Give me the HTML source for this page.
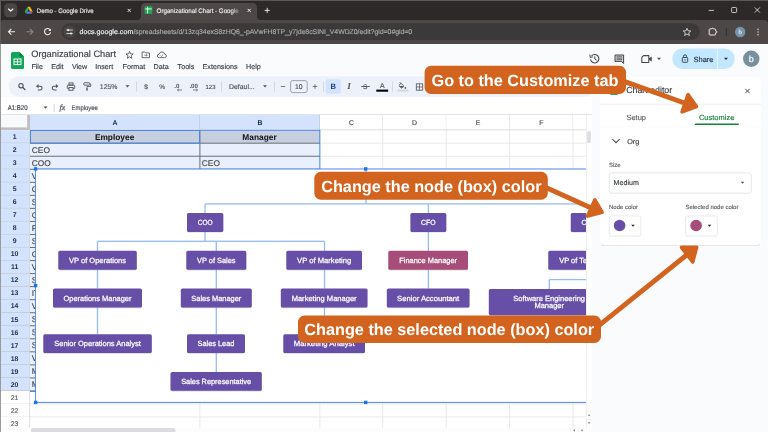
<!DOCTYPE html>
<html lang="en"><head><meta charset="utf-8"><title>Organizational Chart - Google Sheets</title>
<style>
html,body{margin:0;padding:0;}
body{width:768px;height:432px;overflow:hidden;position:relative;background:#fff;font-family:"Liberation Sans", sans-serif;text-rendering:geometricPrecision;}
.sec{position:absolute;left:0;top:0;width:768px;height:432px;will-change:transform;}
svg{display:block;}
text{font-family:"Liberation Sans", sans-serif;white-space:pre;}
</style></head><body>
<div class="sec" id="browser-chrome"><svg width="768" height="432" viewBox="0 0 768 432"><rect x="0" y="0" width="768" height="44" fill="#2d2929"/><path d="M0 44 L0 24 Q0 20 4 20 L764 20 Q768 20 768 24 L768 44 Z" fill="#4d4847"/><rect x="0" y="0" width="768" height="1" fill="#5a5756"/><rect x="4.2" y="3.2" width="13" height="14" fill="#4a4645" rx="4"/><g transform="translate(7.2 7.2)"><path d="M1.3 1.8 L3.5 4 L5.7 1.8" fill="none" stroke="#fff" stroke-width="1.1" stroke-linecap="round" stroke-linejoin="round"/></g><g transform="translate(24.7 6.2)"><path d="M2.75 0.6 L5.25 0.6 L8 5.4 L5.5 5.4 Z" fill="#fbbc04"/>
<path d="M2.75 0.6 L0 5.4 L1.3 7.6 L4 2.9 Z" fill="#34a853"/>
<path d="M1.3 7.6 L6.7 7.6 L8 5.4 L2.6 5.4 Z" fill="#4285f4"/>
<path d="M5.5 5.4 L8 5.4 L6.7 7.6 Z" fill="#ea4335"/></g><g transform="translate(126.2 7.4)"><path d="M1.5 1.5 L4.5 4.5 M4.5 1.5 L1.5 4.5" stroke="#eeeceb" stroke-width="0.95" fill="none"/></g><g transform="translate(137 3)"><path d="M0 17 Q4 17 4 13 L4 4.5 Q4 0 8.5 0 L115.5 0 Q120 0 120 4.5 L120 13 Q120 17 124 17 Z" fill="#4d4847"/></g><rect x="144.6" y="6.2" width="7.8" height="7.8" fill="#23a455" rx="0.8"/><rect x="147.2" y="6.8" width="0.9" height="6.6" fill="#fff"/><rect x="145.2" y="8.5" width="6.6" height="0.9" fill="#fff"/><g transform="translate(246.2 7.4)"><path d="M1.5 1.5 L4.5 4.5 M4.5 1.5 L1.5 4.5" stroke="#f6f4f3" stroke-width="1" fill="none"/></g><g transform="translate(263.2 6.4)"><path d="M4 1.4 L4 6.6 M1.4 4 L6.6 4" stroke="#f0eeed" stroke-width="0.9" fill="none"/></g><g transform="translate(707.5 6)"><path d="M1.2 4.4 L6.4 4.4" stroke="#eee" stroke-width="0.8" fill="none"/></g><g transform="translate(730 6)"><rect x="1.6" y="1.5" width="5" height="5" rx="1" stroke="#eee" stroke-width="0.8" fill="none"/></g><g transform="translate(753.3 6)"><path d="M1.4 1.4 L6.6 6.6 M6.6 1.4 L1.4 6.6" stroke="#eee" stroke-width="0.8" fill="none"/></g><g transform="translate(6.7 26.8)"><path d="M8.3 5 L2 5 M4.6 2.2 L1.8 5 L4.6 7.8" stroke="#eceae9" stroke-width="1.1" fill="none"/></g><g transform="translate(24.7 26.8)"><path d="M1.7 5 L8 5 M5.4 2.2 L8.2 5 L5.4 7.8" stroke="#8a8685" stroke-width="1.1" fill="none"/></g><g transform="translate(42.5 26.8)"><path d="M7.9 3.4 A3.1 3.1 0 1 0 8.1 5.6" stroke="#eceae9" stroke-width="1.1" fill="none"/><path d="M8.4 1.6 L8.4 4.1 L5.9 4.1 Z" fill="#eceae9"/></g><rect x="61.5" y="23.3" width="638.3" height="16.6" fill="#3c393a" rx="8.3"/><rect x="63.4" y="25.6" width="12.4" height="12.4" fill="#4a4645" rx="6.2"/><g transform="translate(65.6 27.8)"><path d="M0.8 2.3 L7.2 2.3 M0.8 5.7 L7.2 5.7" stroke="#eceae9" stroke-width="0.8" fill="none"/><circle cx="2.6" cy="2.3" r="1.1" fill="#eceae9"/><circle cx="5.4" cy="5.7" r="1.1" fill="#eceae9"/></g><g transform="translate(682 27)"><path d="M5 1.3 L6.1 3.8 L8.8 4 L6.7 5.8 L7.4 8.5 L5 7 L2.6 8.5 L3.3 5.8 L1.2 4 L3.9 3.8 Z" stroke="#eceae9" stroke-width="0.8" fill="none" stroke-linejoin="round"/></g><g transform="translate(707 27)"><path d="M3 1.9 L4.7 1.9 Q4.7 1.2 5.4 1.2 Q6.1 1.2 6.1 1.9 L7.8 1.9 Q8.6 1.9 8.6 2.7 L8.6 3.9 Q9.9 3.9 9.9 4.9 Q9.9 5.9 8.6 5.9 L8.6 7.2 Q8.6 8 7.8 8 L3 8 Q2.2 8 2.2 7.2 L2.2 2.7 Q2.2 1.9 3 1.9 Z" stroke="#eceae9" stroke-width="1" fill="none" stroke-linejoin="round"/></g><rect x="725.8" y="28.2" width="0.9" height="7.4" fill="#2e2a2a"/><rect x="735" y="26.8" width="10.4" height="10.4" fill="#7595ab" rx="5.2"/><g transform="translate(755.5 27)"><circle cx="2.5" cy="2.2" r="0.7" fill="#eceae9"/><circle cx="2.5" cy="5" r="0.7" fill="#eceae9"/><circle cx="2.5" cy="7.8" r="0.7" fill="#eceae9"/></g><text x="36.8" y="13" font-size="6.6" fill="#ebe9e8" textLength="56.8" lengthAdjust="spacingAndGlyphs" stroke="#ebe9e8" stroke-width="0.15">Demo - Google Drive</text><text x="156.6" y="13" font-size="6.6" fill="#f1efee" textLength="88.07" lengthAdjust="spacingAndGlyphs" stroke="#f1efee" stroke-width="0.15">Organizational Chart - Google S</text><defs><linearGradient id="fade" x1="0" x2="1" y1="0" y2="0"><stop offset="0" stop-color="#4d4847" stop-opacity="0"/><stop offset="0.75" stop-color="#4d4847"/></linearGradient></defs><rect x="231" y="5" width="14" height="12" fill="url(#fade)"/><text x="79.6" y="34" font-size="7" fill="#f6f4f3" textLength="53.7" lengthAdjust="spacingAndGlyphs" stroke="#f6f4f3" stroke-width="0.15">docs.google.com</text><text x="133.4" y="34" font-size="6.9" fill="#aeaaa9" textLength="278.8" lengthAdjust="spacingAndGlyphs" stroke="#aeaaa9" stroke-width="0.15">/spreadsheets/d/13zq34exS8zHQ6_-pAVwFH8TP_y7jde8cSINI_V4WDZ0/edit?gid=0#gid=0</text><text x="740.2" y="34" font-size="6" fill="#dfe8ee" text-anchor="middle" stroke="#dfe8ee" stroke-width="0.15">b</text></svg></div>
<div class="sec" id="sheets-header"><svg width="768" height="432" viewBox="0 0 768 432"><rect x="0" y="44" width="768" height="388" fill="#f9fbfd"/><g transform="translate(11 52)"><path d="M1.6 0 L8.4 0 L13 4.6 L13 15.4 Q13 17 11.4 17 L1.6 17 Q0 17 0 15.4 L0 1.6 Q0 0 1.6 0 Z" fill="#10a558"/>
<path d="M8.4 0 L13 4.6 L9.8 4.6 Q8.4 4.6 8.4 3.2 Z" fill="#0c8043"/>
<rect x="3" y="7" width="7" height="5.6" fill="none" stroke="#fff" stroke-width="1"/>
<path d="M3 9.8 L10 9.8 M6.5 7 L6.5 12.6" stroke="#fff" stroke-width="0.9"/></g><g transform="translate(124.6 49.8)"><path d="M5 1.5 L6 4 L8.6 4.2 L6.6 5.9 L7.2 8.5 L5 7.1 L2.8 8.5 L3.4 5.9 L1.4 4.2 L4 4 Z" stroke="#444746" stroke-width="0.8" fill="none" stroke-linejoin="round"/></g><g transform="translate(140.8 49.5)"><path d="M1.3 2.5 L4 2.5 L4.9 3.4 L8.7 3.4 L8.7 8.2 L1.3 8.2 Z" stroke="#444746" stroke-width="0.8" fill="none" stroke-linejoin="round"/><path d="M3.6 5.8 L6.4 5.8 M5.4 4.8 L6.5 5.8 L5.4 6.8" stroke="#444746" stroke-width="0.6" fill="none"/></g><g transform="translate(156.4 49.7)"><path d="M3 8 Q1 8 1 6.2 Q1 4.6 2.7 4.4 Q3.2 2.2 5.5 2.2 Q7.8 2.2 8.2 4.4 Q10 4.6 10 6.2 Q10 8 8 8 Z" stroke="#444746" stroke-width="0.8" fill="none"/><path d="M4.2 5.6 L5.2 6.5 L6.9 4.8" stroke="#444746" stroke-width="0.6" fill="none"/></g><g transform="translate(589.3 53.4)"><path d="M2.2 2.6 A4.2 4.2 0 1 1 1.3 6.3" stroke="#444746" stroke-width="1.1" fill="none"/><path d="M0.6 1.2 L0.9 3.9 L3.6 3.5" stroke="#444746" stroke-width="1" fill="none"/><path d="M5.5 2.9 L5.5 5.6 L7.4 6.9" stroke="#444746" stroke-width="1" fill="none"/></g><g transform="translate(613.7 53.7)"><path d="M1.3 1.3 L9.9 1.3 L9.9 9.8 L7.8 7.7 L1.3 7.7 Z" stroke="#444746" stroke-width="1" fill="#c9cbcd" stroke-linejoin="round"/><path d="M2.9 3.1 L8.3 3.1 M2.9 4.5 L8.3 4.5 M2.9 5.9 L8.3 5.9" stroke="#444746" stroke-width="0.7"/></g><g transform="translate(640.5 54)"><path d="M3 1.6 L8.3 1.6 L8.3 8.4 L1.3 8.4 L1.3 3.3 Z" stroke="#444746" stroke-width="1.05" fill="none" stroke-linejoin="round"/><path d="M8.5 4.2 L11.2 2.4 L11.2 7.6 L8.5 5.8 Z" fill="#444746"/></g><g transform="translate(656 57)"><path d="M1 0.8 L5 0.8 L3 3 Z" fill="#444746"/></g><rect x="672.3" y="48.6" width="62.5" height="20.5" fill="#c2e7ff" rx="10.25"/><rect x="717" y="48.6" width="0.7" height="20.5" fill="#f9fbfd"/><g transform="translate(681 53.5)"><rect x="1.3" y="4" width="5.4" height="4.8" rx="0.8" stroke="#1f2f3f" stroke-width="0.85" fill="none"/><path d="M2.5 4 L2.5 2.9 Q2.5 1.3 4 1.3 Q5.5 1.3 5.5 2.9 L5.5 4" stroke="#1f2f3f" stroke-width="0.85" fill="none"/><circle cx="4" cy="6.4" r="0.7" fill="#1f2f3f"/></g><g transform="translate(723 57)"><path d="M1 0.8 L5 0.8 L3 3 Z" fill="#1f2f3f"/></g><rect x="743" y="50.5" width="16.5" height="16.5" fill="#78909c" rx="8.25"/></svg></div>
<div class="sec" id="toolbar"><svg width="768" height="432" viewBox="0 0 768 432"><rect x="8.7" y="76.3" width="585" height="20.6" fill="#edf2fa" rx="10.3"/><g transform="translate(17 81.7)"><circle cx="4" cy="4" r="2.15" stroke="#505355" stroke-width="1.1" fill="none"/><path d="M5.6 5.6 L8.3 8.3" stroke="#505355" stroke-width="1.25"/></g><g transform="translate(34.2 82.2)"><path d="M3.5 4 L6.2 4 Q7.9 4 7.9 5.9 Q7.9 7.8 6.2 7.8 L3.6 7.8" stroke="#505355" stroke-width="1.05" fill="none"/><path d="M4.3 1.9 L1.8 4 L4.3 6.1 Z" fill="#505355"/></g><g transform="translate(50.2 82.2)"><path d="M6.5 4 L3.8 4 Q2.1 4 2.1 5.9 Q2.1 7.8 3.8 7.8 L6.4 7.8" stroke="#505355" stroke-width="1.05" fill="none"/><path d="M5.7 1.9 L8.2 4 L5.7 6.1 Z" fill="#505355"/></g><g transform="translate(66 81.5)"><rect x="1.3" y="3.6" width="7.4" height="3.6" rx="0.8" stroke="#505355" stroke-width="0.9" fill="none"/><rect x="3" y="1.4" width="4" height="2.2" stroke="#505355" stroke-width="0.9" fill="none"/><rect x="3" y="6" width="4" height="2.8" stroke="#505355" stroke-width="0.9" fill="#edf2fa"/></g><g transform="translate(82 81.5)"><rect x="1.8" y="1.3" width="6" height="2.4" rx="0.6" stroke="#505355" stroke-width="0.9" fill="none"/><path d="M7.8 2.5 L8.8 2.5 L8.8 5 L5 5 L5 6.3" stroke="#505355" stroke-width="0.8" fill="none"/><rect x="4.3" y="6.3" width="1.4" height="2.8" fill="#505355"/></g><g transform="translate(124.5 84.5)"><path d="M1 0.8 L5 0.8 L3 3 Z" fill="#505355"/></g><rect x="136" y="81.5" width="0.6" height="10" fill="#c7c7c7"/><rect x="221.3" y="81.5" width="0.6" height="10" fill="#c7c7c7"/><rect x="274.2" y="81.5" width="0.6" height="10" fill="#c7c7c7"/><rect x="323.3" y="81.5" width="0.6" height="10" fill="#c7c7c7"/><rect x="392.3" y="81.5" width="0.6" height="10" fill="#c7c7c7"/><g transform="translate(176.5 88)"><path d="M5.5 2 L1 2 M2.3 0.8 L1 2 L2.3 3.2" stroke="#505355" stroke-width="0.7" fill="none"/></g><g transform="translate(192.5 88)"><path d="M0.5 2 L5 2 M3.7 0.8 L5 2 L3.7 3.2" stroke="#505355" stroke-width="0.7" fill="none"/></g><g transform="translate(262 84.5)"><path d="M1 0.8 L5 0.8 L3 3 Z" fill="#505355"/></g><g transform="translate(279 82.5)"><path d="M1.8 4 L6.2 4" stroke="#505355" stroke-width="0.75"/></g><rect x="290.6" y="80.6" width="16.6" height="12" fill="none" rx="2.2" stroke="#85888a" stroke-width="0.75"/><g transform="translate(311 82.5)"><path d="M1.7 4 L6.3 4 M4 1.7 L4 6.3" stroke="#505355" stroke-width="0.75"/></g><rect x="325.8" y="79.3" width="15" height="14.5" fill="#d3e3fd" rx="2"/><rect x="376.3" y="89.6" width="11.8" height="2.1" fill="#000"/><g transform="translate(397 81)"><path d="M3.8 2.2 L7 5.2 L4.6 7.3 L2 4.8 Z" stroke="#505355" stroke-width="0.8" fill="none" stroke-linejoin="round"/><path d="M2.4 5 L6.6 5 L4.6 7 Z" fill="#505355"/><path d="M2.8 1.2 L4.4 2.8" stroke="#505355" stroke-width="0.8"/><circle cx="8.4" cy="6.9" r="0.85" fill="#505355"/><rect x="0.3" y="8.6" width="11.2" height="1.9" fill="#d6d6d6"/></g><g transform="translate(415.5 83)"><rect x="0.8" y="0.8" width="6.4" height="6.4" stroke="#505355" stroke-width="0.8" fill="none"/><path d="M4 0.8 L4 7.2 M0.8 4 L7.2 4" stroke="#505355" stroke-width="0.7"/></g><rect x="361" y="86" width="8.8" height="0.85" fill="#505355"/></svg></div>
<div class="sec" id="formula-bar"><svg width="768" height="432" viewBox="0 0 768 432"><rect x="0" y="97" width="592.5" height="17.5" fill="#fff"/><g transform="translate(42.5 105.8)"><path d="M1 0.8 L5 0.8 L3 3 Z" fill="#505355"/></g><rect x="53.8" y="104" width="0.7" height="8" fill="#c7c7c7"/><rect x="0" y="114.2" width="592.5" height="0.8" fill="#dcdcdc"/></svg></div>
<div class="sec" id="grid"><svg width="768" height="432" viewBox="0 0 768 432"><rect x="0" y="115" width="592.5" height="317" fill="#fff"/><rect x="30" y="115" width="170" height="15" fill="#d3e3fd"/><rect x="199.5" y="115" width="0.8" height="15" fill="#b9bdc6"/><rect x="200" y="115" width="120" height="15" fill="#d3e3fd"/><rect x="319.5" y="115" width="0.8" height="15" fill="#b9bdc6"/><rect x="320" y="115" width="62.9" height="15" fill="#fff"/><rect x="382.4" y="115" width="0.8" height="15" fill="#dadada"/><rect x="382.9" y="115" width="63.4" height="15" fill="#fff"/><rect x="445.8" y="115" width="0.8" height="15" fill="#dadada"/><rect x="446.3" y="115" width="63.4" height="15" fill="#fff"/><rect x="509.2" y="115" width="0.8" height="15" fill="#dadada"/><rect x="509.7" y="115" width="63.4" height="15" fill="#fff"/><rect x="572.6" y="115" width="0.8" height="15" fill="#dadada"/><rect x="573.1" y="115" width="18.9" height="15" fill="#fff"/><rect x="591.5" y="115" width="0.8" height="15" fill="#dadada"/><rect x="30" y="129.5" width="562" height="0.8" fill="#d4d4d4"/><rect x="0" y="115" width="30" height="15" fill="#bfbfbf"/><rect x="0" y="115" width="27.2" height="12.4" fill="#f8f9fa"/><rect x="0" y="130.2" width="30" height="13.04" fill="#d3e3fd"/><rect x="0" y="142.74" width="30" height="0.8" fill="#b9bdc6"/><rect x="30" y="142.74" width="562" height="0.8" fill="#e3e3e3"/><rect x="0" y="143.24" width="30" height="13.04" fill="#d3e3fd"/><rect x="0" y="155.78" width="30" height="0.8" fill="#b9bdc6"/><rect x="30" y="155.78" width="562" height="0.8" fill="#e3e3e3"/><rect x="0" y="156.28" width="30" height="13.04" fill="#d3e3fd"/><rect x="0" y="168.82" width="30" height="0.8" fill="#b9bdc6"/><rect x="30" y="168.82" width="562" height="0.8" fill="#e3e3e3"/><rect x="0" y="169.32" width="30" height="13.04" fill="#d3e3fd"/><rect x="0" y="181.86" width="30" height="0.8" fill="#b9bdc6"/><rect x="30" y="181.86" width="562" height="0.8" fill="#e3e3e3"/><rect x="0" y="182.36" width="30" height="13.04" fill="#d3e3fd"/><rect x="0" y="194.9" width="30" height="0.8" fill="#b9bdc6"/><rect x="30" y="194.9" width="562" height="0.8" fill="#e3e3e3"/><rect x="0" y="195.4" width="30" height="13.04" fill="#d3e3fd"/><rect x="0" y="207.94" width="30" height="0.8" fill="#b9bdc6"/><rect x="30" y="207.94" width="562" height="0.8" fill="#e3e3e3"/><rect x="0" y="208.44" width="30" height="13.04" fill="#d3e3fd"/><rect x="0" y="220.98" width="30" height="0.8" fill="#b9bdc6"/><rect x="30" y="220.98" width="562" height="0.8" fill="#e3e3e3"/><rect x="0" y="221.48" width="30" height="13.04" fill="#d3e3fd"/><rect x="0" y="234.02" width="30" height="0.8" fill="#b9bdc6"/><rect x="30" y="234.02" width="562" height="0.8" fill="#e3e3e3"/><rect x="0" y="234.52" width="30" height="13.04" fill="#d3e3fd"/><rect x="0" y="247.06" width="30" height="0.8" fill="#b9bdc6"/><rect x="30" y="247.06" width="562" height="0.8" fill="#e3e3e3"/><rect x="0" y="247.56" width="30" height="13.04" fill="#d3e3fd"/><rect x="0" y="260.1" width="30" height="0.8" fill="#b9bdc6"/><rect x="30" y="260.1" width="562" height="0.8" fill="#e3e3e3"/><rect x="0" y="260.6" width="30" height="13.04" fill="#d3e3fd"/><rect x="0" y="273.14" width="30" height="0.8" fill="#b9bdc6"/><rect x="30" y="273.14" width="562" height="0.8" fill="#e3e3e3"/><rect x="0" y="273.64" width="30" height="13.04" fill="#d3e3fd"/><rect x="0" y="286.18" width="30" height="0.8" fill="#b9bdc6"/><rect x="30" y="286.18" width="562" height="0.8" fill="#e3e3e3"/><rect x="0" y="286.68" width="30" height="13.04" fill="#d3e3fd"/><rect x="0" y="299.22" width="30" height="0.8" fill="#b9bdc6"/><rect x="30" y="299.22" width="562" height="0.8" fill="#e3e3e3"/><rect x="0" y="299.72" width="30" height="13.04" fill="#d3e3fd"/><rect x="0" y="312.26" width="30" height="0.8" fill="#b9bdc6"/><rect x="30" y="312.26" width="562" height="0.8" fill="#e3e3e3"/><rect x="0" y="312.76" width="30" height="13.04" fill="#d3e3fd"/><rect x="0" y="325.3" width="30" height="0.8" fill="#b9bdc6"/><rect x="30" y="325.3" width="562" height="0.8" fill="#e3e3e3"/><rect x="0" y="325.8" width="30" height="13.04" fill="#d3e3fd"/><rect x="0" y="338.34" width="30" height="0.8" fill="#b9bdc6"/><rect x="30" y="338.34" width="562" height="0.8" fill="#e3e3e3"/><rect x="0" y="338.84" width="30" height="13.04" fill="#d3e3fd"/><rect x="0" y="351.38" width="30" height="0.8" fill="#b9bdc6"/><rect x="30" y="351.38" width="562" height="0.8" fill="#e3e3e3"/><rect x="0" y="351.88" width="30" height="13.04" fill="#d3e3fd"/><rect x="0" y="364.42" width="30" height="0.8" fill="#b9bdc6"/><rect x="30" y="364.42" width="562" height="0.8" fill="#e3e3e3"/><rect x="0" y="364.92" width="30" height="13.04" fill="#d3e3fd"/><rect x="0" y="377.46" width="30" height="0.8" fill="#b9bdc6"/><rect x="30" y="377.46" width="562" height="0.8" fill="#e3e3e3"/><rect x="0" y="377.96" width="30" height="13.04" fill="#d3e3fd"/><rect x="0" y="390.5" width="30" height="0.8" fill="#b9bdc6"/><rect x="30" y="390.5" width="562" height="0.8" fill="#e3e3e3"/><rect x="0" y="391" width="30" height="13.04" fill="#fff"/><rect x="0" y="403.54" width="30" height="0.8" fill="#e3e3e3"/><rect x="30" y="403.54" width="562" height="0.8" fill="#e3e3e3"/><rect x="0" y="404.04" width="30" height="13.04" fill="#fff"/><rect x="0" y="416.58" width="30" height="0.8" fill="#e3e3e3"/><rect x="30" y="416.58" width="562" height="0.8" fill="#e3e3e3"/><rect x="0" y="417.08" width="30" height="13.04" fill="#fff"/><rect x="0" y="429.62" width="30" height="0.8" fill="#e3e3e3"/><rect x="30" y="429.62" width="562" height="0.8" fill="#e3e3e3"/><rect x="29.3" y="130" width="0.8" height="302" fill="#d4d4d4"/><rect x="199.5" y="130" width="0.8" height="302" fill="#e3e3e3"/><rect x="319.5" y="130" width="0.8" height="302" fill="#e3e3e3"/><rect x="382.4" y="130" width="0.8" height="302" fill="#e3e3e3"/><rect x="445.8" y="130" width="0.8" height="302" fill="#e3e3e3"/><rect x="509.2" y="130" width="0.8" height="302" fill="#e3e3e3"/><rect x="572.6" y="130" width="0.8" height="302" fill="#e3e3e3"/><rect x="30" y="130.2" width="290" height="13.04" fill="#c5cfdf"/><rect x="30" y="143.24" width="290" height="26.08" fill="#e8f0fe"/><rect x="30" y="169.32" width="7" height="221.68" fill="#e8f0fe"/><rect x="30" y="142.69" width="290" height="1" fill="#6b6f75"/><rect x="30" y="155.73" width="290" height="1" fill="#6b6f75"/><rect x="30" y="168.77" width="290" height="1" fill="#6b6f75"/><rect x="30" y="181.81" width="7" height="1" fill="#6b6f75"/><rect x="30" y="194.85" width="7" height="1" fill="#6b6f75"/><rect x="30" y="207.89" width="7" height="1" fill="#6b6f75"/><rect x="30" y="220.93" width="7" height="1" fill="#6b6f75"/><rect x="30" y="233.97" width="7" height="1" fill="#6b6f75"/><rect x="30" y="247.01" width="7" height="1" fill="#6b6f75"/><rect x="30" y="260.05" width="7" height="1" fill="#6b6f75"/><rect x="30" y="273.09" width="7" height="1" fill="#6b6f75"/><rect x="30" y="286.13" width="7" height="1" fill="#6b6f75"/><rect x="30" y="299.17" width="7" height="1" fill="#6b6f75"/><rect x="30" y="312.21" width="7" height="1" fill="#6b6f75"/><rect x="30" y="325.25" width="7" height="1" fill="#6b6f75"/><rect x="30" y="338.29" width="7" height="1" fill="#6b6f75"/><rect x="30" y="351.33" width="7" height="1" fill="#6b6f75"/><rect x="30" y="364.37" width="7" height="1" fill="#6b6f75"/><rect x="30" y="377.41" width="7" height="1" fill="#6b6f75"/><rect x="30" y="390.45" width="7" height="1" fill="#6b6f75"/><rect x="199.4" y="130.2" width="1" height="39.12" fill="#6b6f75"/><rect x="30" y="390.9" width="7" height="0.9" fill="#3b7ded"/><rect x="319.4" y="129.8" width="0.9" height="39.72" fill="#3b7ded"/><rect x="30.5" y="130.5" width="169" height="12.7" fill="none" stroke="#4a86e8" stroke-width="1"/><rect x="200" y="129.9" width="120" height="0.8" fill="#3b7ded"/><rect x="586" y="115" width="6.5" height="317" fill="#fff"/><rect x="586" y="115" width="0.7" height="317" fill="#e9e9e9"/><rect x="587.2" y="131" width="3.6" height="12.2" fill="#dadce0" rx="1.8"/><rect x="0" y="427.6" width="592.5" height="5" fill="#fcfcfd"/><rect x="570.3" y="427.6" width="0.6" height="5" fill="#e6e6e6"/><rect x="578.3" y="427.6" width="0.6" height="5" fill="#e6e6e6"/><rect x="586" y="411" width="6" height="0.6" fill="#e6e6e6"/><rect x="586" y="419.6" width="6" height="0.6" fill="#e6e6e6"/><rect x="31" y="428" width="144.5" height="5" fill="#dadce0" rx="2.2"/><g transform="translate(570 427.2)"><path d="M5 1.8 L3.2 3.2 L5 4.6 Z M11.5 1.8 L13.3 3.2 L11.5 4.6 Z" fill="#80868b"/></g><g transform="translate(586.1 411.3)"><path d="M1.6 4.5 L3 2.7 L4.4 4.5 Z M1.6 11 L3 12.8 L4.4 11 Z" fill="#80868b"/></g><text x="31.2" y="57" font-size="9.25" fill="#3c4043" stroke="#3c4043" stroke-width="0.15">Organizational Chart</text><text x="31.4" y="69" font-size="7.15" fill="#3c4043" stroke="#3c4043" stroke-width="0.15">File</text><text x="51.3" y="69" font-size="7.15" fill="#3c4043" stroke="#3c4043" stroke-width="0.15">Edit</text><text x="71.9" y="69" font-size="7.15" fill="#3c4043" stroke="#3c4043" stroke-width="0.15">View</text><text x="95.3" y="69" font-size="7.15" fill="#3c4043" stroke="#3c4043" stroke-width="0.15">Insert</text><text x="122.6" y="69" font-size="7.15" fill="#3c4043" stroke="#3c4043" stroke-width="0.15">Format</text><text x="153.6" y="69" font-size="7.15" fill="#3c4043" stroke="#3c4043" stroke-width="0.15">Data</text><text x="177.6" y="69" font-size="7.15" fill="#3c4043" stroke="#3c4043" stroke-width="0.15">Tools</text><text x="202.6" y="69" font-size="7.15" fill="#3c4043" stroke="#3c4043" stroke-width="0.15">Extensions</text><text x="246" y="69" font-size="7.15" fill="#3c4043" stroke="#3c4043" stroke-width="0.15">Help</text><text x="693.6" y="62" font-size="7.4" fill="#1f2f3f" stroke="#1f2f3f" stroke-width="0.15">Share</text><text x="751.3" y="62" font-size="9" fill="#fff" text-anchor="middle" stroke="#fff" stroke-width="0.15">b</text><text x="99.8" y="89" font-size="6.9" fill="#505355" stroke="#505355" stroke-width="0.15">125%</text><text x="146" y="89" font-size="6.6" fill="#505355" text-anchor="middle" stroke="#505355" stroke-width="0.15">$</text><text x="162.2" y="89" font-size="6.6" fill="#505355" text-anchor="middle" stroke="#505355" stroke-width="0.15">%</text><text x="176.8" y="88" font-size="6.2" fill="#505355" font-weight="700" text-anchor="middle">.0</text><text x="193.7" y="88" font-size="6.2" fill="#505355" font-weight="700" text-anchor="middle">.00</text><text x="210.5" y="89" font-size="5.9" fill="#505355" text-anchor="middle" stroke="#505355" stroke-width="0.15">123</text><text x="229" y="89" font-size="6.9" fill="#505355" stroke="#505355" stroke-width="0.15">Defaul...</text><text x="298.8" y="89" font-size="6.9" fill="#505355" text-anchor="middle" stroke="#505355" stroke-width="0.15">10</text><text x="333.3" y="89" font-size="7.6" fill="#1a3a6e" font-weight="700" text-anchor="middle">B</text><text x="349" y="89" font-size="9.2" fill="#505355" font-weight="700" text-anchor="middle" style="font-style:italic;font-family:Liberation Serif,serif">I</text><text x="365.3" y="89" font-size="6.6" fill="#505355" text-anchor="middle" stroke="#505355" stroke-width="0.15">S</text><text x="382.2" y="88" font-size="6.9" fill="#505355" text-anchor="middle" stroke="#505355" stroke-width="0.2">A</text><text x="7.7" y="110" font-size="6.8" fill="#3c4043" textLength="19.9" lengthAdjust="spacingAndGlyphs" stroke="#3c4043" stroke-width="0.15">A1:B20</text><text x="59.6" y="110" font-size="7.8" fill="#5f6368" style="font-style:italic;font-family:Liberation Serif,serif" stroke="#5f6368" stroke-width="0.3">fx</text><text x="71.5" y="110" font-size="6.6" fill="#4a4d50" textLength="26.4" lengthAdjust="spacingAndGlyphs" stroke="#4a4d50" stroke-width="0.15">Employee</text><text x="115" y="125" font-size="6.9" fill="#0c2b57" font-weight="700" text-anchor="middle">A</text><text x="260" y="125" font-size="6.9" fill="#0c2b57" font-weight="700" text-anchor="middle">B</text><text x="351.45" y="125" font-size="6.9" fill="#4a4d50" text-anchor="middle" stroke="#4a4d50" stroke-width="0.15">C</text><text x="414.6" y="125" font-size="6.9" fill="#4a4d50" text-anchor="middle" stroke="#4a4d50" stroke-width="0.15">D</text><text x="478" y="125" font-size="6.9" fill="#4a4d50" text-anchor="middle" stroke="#4a4d50" stroke-width="0.15">E</text><text x="541.4" y="125" font-size="6.9" fill="#4a4d50" text-anchor="middle" stroke="#4a4d50" stroke-width="0.15">F</text><text x="14.6" y="139" font-size="6.9" fill="#1d2d4a" font-weight="700" text-anchor="middle">1</text><text x="14.6" y="152" font-size="6.9" fill="#1d2d4a" font-weight="700" text-anchor="middle">2</text><text x="14.6" y="165" font-size="6.9" fill="#1d2d4a" font-weight="700" text-anchor="middle">3</text><text x="14.6" y="178" font-size="6.9" fill="#1d2d4a" font-weight="700" text-anchor="middle">4</text><text x="14.6" y="191" font-size="6.9" fill="#1d2d4a" font-weight="700" text-anchor="middle">5</text><text x="14.6" y="204" font-size="6.9" fill="#1d2d4a" font-weight="700" text-anchor="middle">6</text><text x="14.6" y="217" font-size="6.9" fill="#1d2d4a" font-weight="700" text-anchor="middle">7</text><text x="14.6" y="230" font-size="6.9" fill="#1d2d4a" font-weight="700" text-anchor="middle">8</text><text x="14.6" y="243" font-size="6.9" fill="#1d2d4a" font-weight="700" text-anchor="middle">9</text><text x="14.6" y="256" font-size="6.9" fill="#1d2d4a" font-weight="700" text-anchor="middle">10</text><text x="14.6" y="269" font-size="6.9" fill="#1d2d4a" font-weight="700" text-anchor="middle">11</text><text x="14.6" y="282" font-size="6.9" fill="#1d2d4a" font-weight="700" text-anchor="middle">12</text><text x="14.6" y="295" font-size="6.9" fill="#1d2d4a" font-weight="700" text-anchor="middle">13</text><text x="14.6" y="308" font-size="6.9" fill="#1d2d4a" font-weight="700" text-anchor="middle">14</text><text x="14.6" y="322" font-size="6.9" fill="#1d2d4a" font-weight="700" text-anchor="middle">15</text><text x="14.6" y="335" font-size="6.9" fill="#1d2d4a" font-weight="700" text-anchor="middle">16</text><text x="14.6" y="348" font-size="6.9" fill="#1d2d4a" font-weight="700" text-anchor="middle">17</text><text x="14.6" y="361" font-size="6.9" fill="#1d2d4a" font-weight="700" text-anchor="middle">18</text><text x="14.6" y="374" font-size="6.9" fill="#1d2d4a" font-weight="700" text-anchor="middle">19</text><text x="14.6" y="387" font-size="6.9" fill="#1d2d4a" font-weight="700" text-anchor="middle">20</text><text x="14.6" y="400" font-size="6.9" fill="#5f6368" text-anchor="middle" stroke="#5f6368" stroke-width="0.15">21</text><text x="14.6" y="413" font-size="6.9" fill="#5f6368" text-anchor="middle" stroke="#5f6368" stroke-width="0.15">22</text><text x="14.6" y="426" font-size="6.9" fill="#5f6368" text-anchor="middle" stroke="#5f6368" stroke-width="0.15">23</text><text x="31.8" y="179" font-size="8.3" fill="#454545" stroke="#454545" stroke-width="0.15">V</text><text x="31.8" y="192" font-size="8.3" fill="#454545" stroke="#454545" stroke-width="0.15">O</text><text x="31.8" y="205" font-size="8.3" fill="#454545" stroke="#454545" stroke-width="0.15">S</text><text x="31.8" y="218" font-size="8.3" fill="#454545" stroke="#454545" stroke-width="0.15">C</text><text x="31.8" y="231" font-size="8.3" fill="#454545" stroke="#454545" stroke-width="0.15">F</text><text x="31.8" y="244" font-size="8.3" fill="#454545" stroke="#454545" stroke-width="0.15">S</text><text x="31.8" y="257" font-size="8.3" fill="#454545" stroke="#454545" stroke-width="0.15">C</text><text x="31.8" y="270" font-size="8.3" fill="#454545" stroke="#454545" stroke-width="0.15">V</text><text x="31.8" y="283" font-size="8.3" fill="#454545" stroke="#454545" stroke-width="0.15">S</text><text x="31.8" y="296" font-size="8.3" fill="#454545" stroke="#454545" stroke-width="0.15">IT</text><text x="31.8" y="309" font-size="8.3" fill="#454545" stroke="#454545" stroke-width="0.15">V</text><text x="31.8" y="322" font-size="8.3" fill="#454545" stroke="#454545" stroke-width="0.15">S</text><text x="31.8" y="335" font-size="8.3" fill="#454545" stroke="#454545" stroke-width="0.15">S</text><text x="31.8" y="348" font-size="8.3" fill="#454545" stroke="#454545" stroke-width="0.15">S</text><text x="31.8" y="361" font-size="8.3" fill="#454545" stroke="#454545" stroke-width="0.15">V</text><text x="31.8" y="374" font-size="8.3" fill="#454545" stroke="#454545" stroke-width="0.15">M</text><text x="31.8" y="387" font-size="8.3" fill="#454545" stroke="#454545" stroke-width="0.15">M</text><text x="114.6" y="140" font-size="8.35" fill="#111" font-weight="700" text-anchor="middle">Employee</text><text x="259.5" y="140" font-size="8.35" fill="#111" font-weight="700" text-anchor="middle">Manager</text><text x="31.8" y="153" font-size="8.35" fill="#454545" stroke="#454545" stroke-width="0.15">CEO</text><text x="31.8" y="166" font-size="8.35" fill="#454545" stroke="#454545" stroke-width="0.15">COO</text><text x="201.8" y="166" font-size="8.35" fill="#454545" stroke="#454545" stroke-width="0.15">CEO</text></svg></div>
<div class="sec" id="org-chart"><svg width="768" height="432" viewBox="0 0 768 432"><rect x="36" y="169" width="550" height="233" fill="#fff"/><rect x="365.35" y="170" width="1.3" height="34" fill="#94bbf7"/><rect x="205" y="203.25" width="381" height="1.3" fill="#94bbf7"/><rect x="204.35" y="204" width="1.3" height="9" fill="#94bbf7"/><rect x="427.75" y="204" width="1.3" height="9" fill="#94bbf7"/><rect x="204.35" y="232" width="1.3" height="9.3" fill="#94bbf7"/><rect x="97.5" y="240.65" width="227" height="1.3" fill="#94bbf7"/><rect x="96.85" y="241.3" width="1.3" height="9.7" fill="#94bbf7"/><rect x="215.65" y="241.3" width="1.3" height="9.7" fill="#94bbf7"/><rect x="323.85" y="241.3" width="1.3" height="9.7" fill="#94bbf7"/><rect x="427.75" y="232" width="1.3" height="19" fill="#94bbf7"/><rect x="96.85" y="270" width="1.3" height="18.5" fill="#94bbf7"/><rect x="215.65" y="270" width="1.3" height="18.5" fill="#94bbf7"/><rect x="323.85" y="270" width="1.3" height="18.5" fill="#94bbf7"/><rect x="427.75" y="270" width="1.3" height="18.5" fill="#94bbf7"/><rect x="96.85" y="307.5" width="1.3" height="26.8" fill="#94bbf7"/><rect x="215.65" y="307.5" width="1.3" height="26.8" fill="#94bbf7"/><rect x="323.85" y="307.5" width="1.3" height="26.8" fill="#94bbf7"/><rect x="215.65" y="353" width="1.3" height="19" fill="#94bbf7"/><rect x="549.3" y="278.95" width="36.7" height="1.3" fill="#94bbf7"/><rect x="548.65" y="279.6" width="1.3" height="9.4" fill="#94bbf7"/><rect x="187.2" y="213.6" width="36.1" height="19" fill="#000" rx="1.6" opacity="0.16"/><rect x="187" y="213" width="36.3" height="19" fill="#674ea7" rx="1.6"/><rect x="410.6" y="213.6" width="35.7" height="19" fill="#000" rx="1.6" opacity="0.16"/><rect x="410.4" y="213" width="35.9" height="19" fill="#674ea7" rx="1.6"/><rect x="570.95" y="213.6" width="15.05" height="19" fill="#000" rx="1.6" opacity="0.16"/><path d="M572.35 213 L586 213 L586 232 L572.35 232 Q570.75 232 570.75 230.4 L570.75 214.6 Q570.75 213 572.35 213 Z" fill="#674ea7"/><rect x="58.5" y="251.4" width="78.3" height="19" fill="#000" rx="1.6" opacity="0.16"/><rect x="58.3" y="250.8" width="78.5" height="19" fill="#674ea7" rx="1.6"/><rect x="186.5" y="251.4" width="59.8" height="19" fill="#000" rx="1.6" opacity="0.16"/><rect x="186.3" y="250.8" width="60" height="19" fill="#674ea7" rx="1.6"/><rect x="286.5" y="251.4" width="75.5" height="19" fill="#000" rx="1.6" opacity="0.16"/><rect x="286.3" y="250.8" width="75.7" height="19" fill="#674ea7" rx="1.6"/><rect x="388.5" y="251.4" width="79.5" height="19" fill="#000" rx="1.6" opacity="0.16"/><rect x="388.3" y="250.8" width="79.7" height="19" fill="#a64d79" rx="1.6"/><rect x="548.45" y="251.4" width="37.55" height="19" fill="#000" rx="1.6" opacity="0.16"/><path d="M549.85 250.8 L586 250.8 L586 269.8 L549.85 269.8 Q548.25 269.8 548.25 268.2 L548.25 252.4 Q548.25 250.8 549.85 250.8 Z" fill="#674ea7"/><rect x="53.2" y="289.2" width="88.8" height="19" fill="#000" rx="1.6" opacity="0.16"/><rect x="53" y="288.6" width="89" height="19" fill="#674ea7" rx="1.6"/><rect x="181" y="289.2" width="70.8" height="19" fill="#000" rx="1.6" opacity="0.16"/><rect x="180.8" y="288.6" width="71" height="19" fill="#674ea7" rx="1.6"/><rect x="281" y="289.2" width="86.5" height="19" fill="#000" rx="1.6" opacity="0.16"/><rect x="280.8" y="288.6" width="86.7" height="19" fill="#674ea7" rx="1.6"/><rect x="387" y="289.2" width="82.5" height="19" fill="#000" rx="1.6" opacity="0.16"/><rect x="386.8" y="288.6" width="82.7" height="19" fill="#674ea7" rx="1.6"/><rect x="489" y="289.5" width="97" height="26.3" fill="#000" rx="1.6" opacity="0.16"/><path d="M490.4 288.9 L586 288.9 L586 315.2 L490.4 315.2 Q488.8 315.2 488.8 313.6 L488.8 290.5 Q488.8 288.9 490.4 288.9 Z" fill="#674ea7"/><rect x="43.5" y="334.9" width="108.3" height="18.8" fill="#000" rx="1.6" opacity="0.16"/><rect x="43.3" y="334.3" width="108.5" height="18.8" fill="#674ea7" rx="1.6"/><rect x="187.2" y="334.9" width="57.8" height="18.8" fill="#000" rx="1.6" opacity="0.16"/><rect x="187" y="334.3" width="58" height="18.8" fill="#674ea7" rx="1.6"/><rect x="283.5" y="334.9" width="81.5" height="18.8" fill="#000" rx="1.6" opacity="0.16"/><rect x="283.3" y="334.3" width="81.7" height="18.8" fill="#674ea7" rx="1.6"/><rect x="170.7" y="372.6" width="91.1" height="18.8" fill="#000" rx="1.6" opacity="0.16"/><rect x="170.5" y="372" width="91.3" height="18.8" fill="#674ea7" rx="1.6"/><defs><clipPath id="cc"><rect x="36" y="169" width="550" height="233"/></clipPath></defs><g clip-path="url(#cc)"><text x="205.15" y="225" font-size="7.5" fill="#fff" textLength="15" lengthAdjust="spacingAndGlyphs" text-anchor="middle" stroke="#fff" stroke-width="0.25">COO</text><text x="428.35" y="225" font-size="7.5" fill="#fff" textLength="14.5" lengthAdjust="spacingAndGlyphs" text-anchor="middle" stroke="#fff" stroke-width="0.25">CFO</text><text x="588.75" y="225" font-size="7.5" fill="#fff" textLength="14.5" lengthAdjust="spacingAndGlyphs" text-anchor="middle" stroke="#fff" stroke-width="0.25">CTO</text><text x="97.55" y="263" font-size="7.5" fill="#fff" textLength="57" lengthAdjust="spacingAndGlyphs" text-anchor="middle" stroke="#fff" stroke-width="0.25">VP of Operations</text><text x="216.3" y="263" font-size="7.5" fill="#fff" textLength="38.5" lengthAdjust="spacingAndGlyphs" text-anchor="middle" stroke="#fff" stroke-width="0.25">VP of Sales</text><text x="324.15" y="263" font-size="7.5" fill="#fff" textLength="54.2" lengthAdjust="spacingAndGlyphs" text-anchor="middle" stroke="#fff" stroke-width="0.25">VP of Marketing</text><text x="428.15" y="263" font-size="7.5" fill="#fff" textLength="57.8" lengthAdjust="spacingAndGlyphs" text-anchor="middle" stroke="#fff" stroke-width="0.25">Finance Manager</text><text x="588" y="263" font-size="7.5" fill="#fff" textLength="57.5" lengthAdjust="spacingAndGlyphs" text-anchor="middle" stroke="#fff" stroke-width="0.25">VP of Technology</text><text x="97.5" y="301" font-size="7.5" fill="#fff" textLength="68" lengthAdjust="spacingAndGlyphs" text-anchor="middle" stroke="#fff" stroke-width="0.25">Operations Manager</text><text x="216.3" y="301" font-size="7.5" fill="#fff" textLength="50" lengthAdjust="spacingAndGlyphs" text-anchor="middle" stroke="#fff" stroke-width="0.25">Sales Manager</text><text x="324.15" y="301" font-size="7.5" fill="#fff" textLength="65" lengthAdjust="spacingAndGlyphs" text-anchor="middle" stroke="#fff" stroke-width="0.25">Marketing Manager</text><text x="428.15" y="301" font-size="7.5" fill="#fff" textLength="62.2" lengthAdjust="spacingAndGlyphs" text-anchor="middle" stroke="#fff" stroke-width="0.25">Senior Accountant</text><text x="97.55" y="346" font-size="7.5" fill="#fff" textLength="86.5" lengthAdjust="spacingAndGlyphs" text-anchor="middle" stroke="#fff" stroke-width="0.25">Senior Operations Analyst</text><text x="216" y="346" font-size="7.5" fill="#fff" textLength="36.8" lengthAdjust="spacingAndGlyphs" text-anchor="middle" stroke="#fff" stroke-width="0.25">Sales Lead</text><text x="324.15" y="346" font-size="7.5" fill="#fff" textLength="60.8" lengthAdjust="spacingAndGlyphs" text-anchor="middle" stroke="#fff" stroke-width="0.25">Marketing Analyst</text><text x="216.15" y="384" font-size="7.5" fill="#fff" textLength="70" lengthAdjust="spacingAndGlyphs" text-anchor="middle" stroke="#fff" stroke-width="0.25">Sales Representative</text><text x="549.2" y="301" font-size="7.5" fill="#fff" text-anchor="middle" stroke="#fff" stroke-width="0.25">Software Engineering</text><text x="549.2" y="308" font-size="7.5" fill="#fff" text-anchor="middle" stroke="#fff" stroke-width="0.25">Manager</text></g><rect x="36" y="168.5" width="550" height="1" fill="#5288e8"/><rect x="36" y="401.9" width="550" height="1" fill="#5288e8"/><rect x="35.1" y="169" width="0.9" height="233" fill="#5288e8"/><rect x="33.9" y="167.2" width="3.4" height="3.4" fill="#1a73e8"/><rect x="364" y="167.2" width="3.4" height="3.4" fill="#1a73e8"/><rect x="33.9" y="283.9" width="3.4" height="3.4" fill="#1a73e8"/><rect x="33.9" y="400.7" width="3.4" height="3.4" fill="#1a73e8"/><rect x="364" y="400.7" width="3.4" height="3.4" fill="#1a73e8"/></svg></div>
<div class="sec" id="chart-editor"><svg width="768" height="432" viewBox="0 0 768 432"><rect x="592" y="76" width="176" height="356" fill="#f9fbfd"/><rect x="601.5" y="243" width="158" height="3" fill="#dfe1e4" rx="1.5"/><rect x="600" y="76.8" width="161" height="168.4" fill="#fff" rx="5"/><rect x="600" y="103.8" width="161" height="0.7" fill="#e3e5e8"/><rect x="600" y="126.6" width="161" height="0.6" fill="#f6f7f8"/><g transform="translate(609.5 86)"><rect x="0.5" y="0.5" width="8" height="8" rx="1" fill="#fff" stroke="#34a853" stroke-width="1"/><path d="M2.5 6.5 L2.5 4.5 M4.5 6.5 L4.5 2.5 M6.5 6.5 L6.5 3.5" stroke="#34a853" stroke-width="0.9"/></g><g transform="translate(744 87.5)"><path d="M1.3 1.3 L5.7 5.7 M5.7 1.3 L1.3 5.7" stroke="#3c4043" stroke-width="0.95" fill="none"/></g><rect x="694.6" y="123.4" width="44.4" height="1.5" fill="#188038" rx="0.75"/><g transform="translate(611 137.5)"><path d="M1.3 1.5 L5 5.2 L8.7 1.5" stroke="#444746" stroke-width="1.05" fill="none"/></g><rect x="609.3" y="172.9" width="142" height="20.3" fill="#fff" rx="2" stroke="#dfe1e5" stroke-width="0.8"/><g transform="translate(739.5 181)"><path d="M1.2 0.8 L4.8 0.8 L3 2.8 Z" fill="#505355"/></g><rect x="609.3" y="215.9" width="31.6" height="20.3" fill="#fff" rx="2" stroke="#e1e3e6" stroke-width="0.8"/><rect x="685.7" y="215.9" width="31.6" height="20.3" fill="#fff" rx="2" stroke="#e1e3e6" stroke-width="0.8"/><rect x="613.8" y="219.7" width="11.6" height="11.6" fill="#674ea7" rx="5.8"/><rect x="690.3" y="219.7" width="11.6" height="11.6" fill="#a64d79" rx="5.8"/><g transform="translate(630 224)"><path d="M1.2 0.8 L4.8 0.8 L3 2.8 Z" fill="#202124"/></g><g transform="translate(706.5 224)"><path d="M1.2 0.8 L4.8 0.8 L3 2.8 Z" fill="#202124"/></g><text x="626.2" y="93" font-size="8.8" fill="#3c4043" stroke="#3c4043" stroke-width="0.15">Chart editor</text><text x="636.2" y="120" font-size="7.5" fill="#5f6368" text-anchor="middle" stroke="#5f6368" stroke-width="0.15">Setup</text><text x="716.6" y="120" font-size="7.5" fill="#188038" text-anchor="middle" stroke="#188038" stroke-width="0.15">Customize</text><text x="627.2" y="144" font-size="7.2" fill="#3c4043" stroke="#3c4043" stroke-width="0.15">Org</text><text x="609" y="167" font-size="6" fill="#5f6368" stroke="#5f6368" stroke-width="0.15">Size</text><text x="613.6" y="185" font-size="7.1" fill="#3c4043" stroke="#3c4043" stroke-width="0.15">Medium</text><text x="609" y="209" font-size="6" fill="#5f6368" stroke="#5f6368" stroke-width="0.15">Node color</text><text x="685.4" y="209" font-size="6" fill="#5f6368" stroke="#5f6368" stroke-width="0.15">Selected node color</text></svg></div>
<div class="sec" id="annotations"><svg width="768" height="432" viewBox="0 0 768 432"><path d="M620 79.9 L685.05 103.25" stroke="#d2641f" stroke-width="5.0" fill="none"/><path d="M696.5 106.6 L688 94.6 L682.1 111.9 Z" fill="#d2641f" stroke="#d2641f" stroke-width="3.6" stroke-linejoin="round"/><path d="M542 185.7 L591.25 207.95" stroke="#d2641f" stroke-width="5.0" fill="none"/><path d="M602.2 212.3 L594.9 199.8 L587.6 216.1 Z" fill="#d2641f" stroke="#d2641f" stroke-width="3.6" stroke-linejoin="round"/><path d="M596 327.9 L687.1 254.65" stroke="#d2641f" stroke-width="5.0" fill="none"/><path d="M696.6 247.2 L681.5 247.3 L692.7 262 Z" fill="#d2641f" stroke="#d2641f" stroke-width="3.6" stroke-linejoin="round"/><rect x="424.6" y="65.8" width="201.4" height="28.2" fill="#d2641f" rx="6.5"/><text x="431.5" y="86" font-size="16.25" fill="#fff" font-weight="700">Go to the Customize tab</text><rect x="314.3" y="171.8" width="233.5" height="27.9" fill="#d2641f" rx="6.5"/><text x="321.2" y="192" font-size="16.25" fill="#fff" font-weight="700">Change the node (box) color</text><rect x="298" y="315.5" width="303" height="27.5" fill="#d2641f" rx="6.5"/><text x="304.3" y="335" font-size="16.25" fill="#fff" font-weight="700">Change the selected node (box) color</text><rect x="0" y="0" width="1" height="44" fill="#5f5c5b"/><rect x="0" y="44" width="1" height="388" fill="#9a9a9a"/></svg></div>
</body></html>
